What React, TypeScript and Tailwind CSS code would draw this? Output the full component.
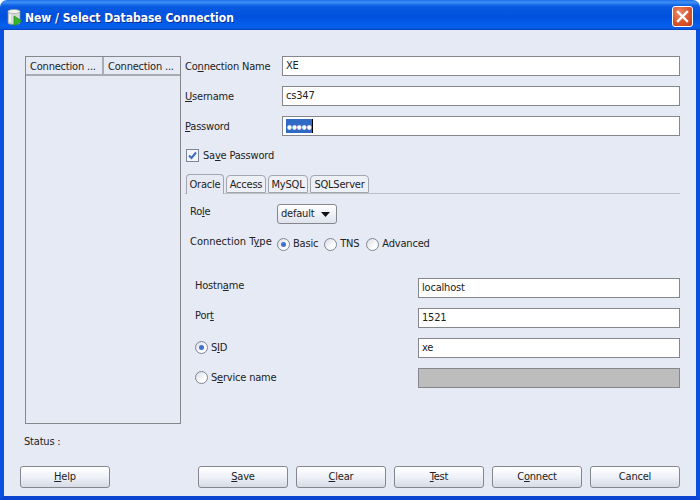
import type { ReactNode } from "react";

const font = "font-['DejaVu_Sans_Condensed','DejaVu_Sans',sans-serif]";

function Field({ value, bg = "bg-white", children }: { value?: string; bg?: string; children?: ReactNode }) {
  return (
    <div className={`flex h-[20px] items-center border border-[#85878c] pl-[3px] pt-px text-[11px] text-[#222] ${bg}`}>
      {value}
      {children}
    </div>
  );
}

function Radio({ checked = false }: { checked?: boolean }) {
  return (
    <span className="flex size-[13px] shrink-0 items-center justify-center rounded-full border border-[#7d8694] bg-[linear-gradient(135deg,#d9dde6,#ffffff_70%)]">
      {checked && <span className="size-[5px] rounded-full bg-[#3f6fcf]" />}
    </span>
  );
}

function Btn({ children, className = "" }: { children: ReactNode; className?: string }) {
  return (
    <button className={`h-[22px] w-[90px] rounded-[3px] border border-[#85878c] bg-[linear-gradient(180deg,#ffffff_0%,#f1f3f9_45%,#d6dbe6_100%)] text-[11px] leading-[20px] text-[#222] ${className}`}>
      {children}
    </button>
  );
}

function Tab({ label, active = false, width }: { label: ReactNode; active?: boolean; width: string }) {
  return (
    <div
      className={`${width} whitespace-nowrap rounded-t-[4px] border border-[#a3a6ad] pt-px text-center text-[11px] ${
        active ? "relative z-10 -mb-px h-[20px] border-b-0 bg-[#e6eaf5] leading-[18px]" : "h-[18px] bg-[#eef0f7] leading-[16px]"
      }`}
    >
      {label}
    </div>
  );
}

export default function App() {
  return (
    <div className={`flex h-[500px] w-[700px] flex-col tracking-[-0.2px] text-[#222] ${font}`}>
      {/* title bar */}
      <div className="flex h-[30px] shrink-0 items-center rounded-t-[7px] bg-[linear-gradient(180deg,#1f70ea_0%,#3d8ff7_8%,#0a5ce2_20%,#0050dc_55%,#0560ee_85%,#0a58e0_95%,#0040b8_100%)] pl-[7px] pr-[7px]">
        <svg width="16" height="19" viewBox="0 0 16 19" className="mt-[5px] shrink-0">
          <path d="M1 3.5C1 1.5 13 1.5 13 3.5V15C13 17 1 17 1 15Z" fill="#d5d9d6" stroke="#7f8f88" strokeWidth="0.7" />
          <ellipse cx="7" cy="3.5" rx="6" ry="2" fill="#f2f4f2" stroke="#8d9a94" strokeWidth="0.6" />
          <path d="M3 6V14" stroke="#f8f8f8" strokeWidth="1.5" />
          <path d="M7 8L15 13L7 18Z" fill="#34b52a" stroke="#1d7c1a" strokeWidth="0.6" />
        </svg>
        <span className="ml-[2px] mt-[5px] text-[12px] font-bold tracking-normal text-white [text-shadow:1px_1px_0_#0a2f96]">
          New / Select Database Connection
        </span>
        <div className="ml-auto mt-[2px] flex size-[21px] items-center justify-center rounded-[3px] border border-white bg-[radial-gradient(circle_at_35%_30%,#ea8a66,#d9552e_55%,#c23c1a)]">
          <svg width="13" height="13" viewBox="0 0 13 13">
            <path d="M2 2L11 11M11 2L2 11" stroke="#fff" strokeWidth="2.4" strokeLinecap="square" />
          </svg>
        </div>
      </div>

      {/* window body */}
      <div className="flex min-h-0 flex-1 flex-col border-x-4 border-b-4 border-x-[#0a4fe0] border-b-[#0a44d0] bg-[#e6eaf5] pl-[21px] pr-[16px] pt-[26px]">
        <div className="flex h-[368px] shrink-0">
          {/* connection list */}
          <div className="h-full w-[156px] shrink-0 border border-[#85878c]">
            <div className="flex h-[19px] whitespace-nowrap border-b-2 border-[#a8abb2] text-[11px] leading-[19px]">
              <div className="w-[78px] border-r-2 border-[#a8abb2] pl-[4px]">Connection ...</div>
              <div className="flex-1 pl-[4px]">Connection ...</div>
            </div>
          </div>

          {/* form */}
          <div className="ml-[4px] min-w-0 flex-1 text-[11px]">
            <div className="grid grid-cols-[97px_1fr] items-center gap-y-[10px]">
              <span className="pt-[2px]">
                Co<u>n</u>nection Name
              </span>
              <Field value="XE" />
              <span className="pt-[2px]">
                <u>U</u>sername
              </span>
              <Field value="cs347" />
              <span className="pt-[2px]">
                <u>P</u>assword
              </span>
              <Field>
                <span className="-mt-px flex h-[14px] items-center border-r border-black bg-[#316ac5] pl-px text-[6px] tracking-[0.2px] text-white">
                  ●●●●●
                </span>
              </Field>
            </div>

            <div className="mt-[10px] flex items-center pl-px">
              <span className="flex size-[13px] items-center justify-center border border-[#7d8694] bg-[#f3f5f9]">
                <svg width="11" height="11" viewBox="0 0 11 11">
                  <path d="M2 5.5L4.5 8L9 2.5" fill="none" stroke="#3d6cc8" strokeWidth="2" />
                </svg>
              </span>
              <span className="ml-[4px] pt-[2px]">
                Sa<u>v</u>e Password
              </span>
            </div>

            {/* tabs */}
            <div className="mt-[9px] flex items-end gap-[2px] border-b border-[#bcc0c9] pl-px">
              <Tab label="Oracle" active width="w-[38px]" />
              <Tab label="Access" width="w-[40px]" />
              <Tab label="MySQL" width="w-[40px]" />
              <Tab label="SQLServer" width="w-[59px]" />
            </div>

            <div className="mt-[10px] flex h-[20px] items-center pl-[5px]">
              <span className="-mt-[2px] w-[87px]">
                Ro<u>l</u>e
              </span>
              <div className="flex h-[20px] w-[60px] items-center rounded-[3px] border border-[#85878c] bg-[linear-gradient(180deg,#ffffff,#dfe3ec)] pl-[3px] pt-px">
                default
                <svg width="9" height="5" viewBox="0 0 9 5" className="ml-[7px]">
                  <path d="M0 0H9L4.5 5Z" fill="#111" />
                </svg>
              </div>
            </div>

            <div className="mt-[13px] flex h-[16px] items-center pl-[5px]">
              <span className="-mt-[4px] w-[87px] whitespace-nowrap tracking-normal">
                Connection T<u>y</u>pe
              </span>
              <Radio checked />
              <span className="ml-[3px]">Basic</span>
              <span className="ml-[6px]">
                <Radio />
              </span>
              <span className="ml-[3px]">TNS</span>
              <span className="ml-[7px]">
                <Radio />
              </span>
              <span className="ml-[3px]">Advanced</span>
            </div>

            {/* connection details */}
            <div className="mt-[25px] grid grid-cols-[223px_1fr] items-center gap-y-[10px] pl-[10px]">
              <span className="-mt-[2px]">
                Hostn<u>a</u>me
              </span>
              <Field value="localhost" />
              <span className="-mt-[2px]">
                Por<u>t</u>
              </span>
              <Field value="1521" />
              <span className="flex items-center">
                <Radio checked />
                <span className="ml-[3px] pt-[2px]">
                  S<u>I</u>D
                </span>
              </span>
              <Field value="xe" />
              <span className="flex items-center">
                <Radio />
                <span className="ml-[3px] pt-[2px]">
                  S<u>e</u>rvice name
                </span>
              </span>
              <Field bg="bg-[#bdbdbd]" />
            </div>
          </div>
        </div>

        <div className="mt-[11px] -ml-px h-[14px] text-[11px] leading-[14px]">Status :</div>

        <div className="mt-[17px] -ml-[5px] flex gap-[8px]">
          <Btn className="mr-[80px]">
            <u>H</u>elp
          </Btn>
          <Btn>
            <u>S</u>ave
          </Btn>
          <Btn>
            <u>C</u>lear
          </Btn>
          <Btn>
            <u>T</u>est
          </Btn>
          <Btn>
            C<u>o</u>nnect
          </Btn>
          <Btn>Cancel</Btn>
        </div>
      </div>
    </div>
  );
}
